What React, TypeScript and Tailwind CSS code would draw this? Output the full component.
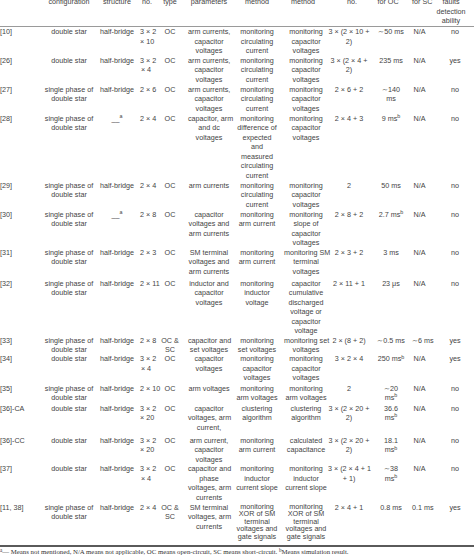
import React from "react";

const GRID =
  "grid grid-cols-[44px_50px_46px_12px_36px_42px_54px_44px_42px_42px_15px_56px]";

type Row = { h: string; c: string[][]; tight?: boolean };

const SP = "single phase of";
const DS = "double star";
const HB = "half-bridge";

const rows: Row[] = [
  {
    h: "h-[28.7px]",
    c: [["[10]"], [DS], [HB], ["3 × 2", "× 10"], ["OC"], ["arm currents,", "capacitor", "voltages"], ["monitoring", "circulating", "current"], ["monitoring", "capacitor", "voltages"], ["3 × (2 × 10 +", "2)"], ["∼50 ms"], ["N/A"], ["no"]],
  },
  {
    h: "h-[29px]",
    c: [["[26]"], [DS], [HB], ["3 × 2", "× 4"], ["OC"], ["arm currents,", "capacitor", "voltages"], ["monitoring", "circulating", "current"], ["monitoring", "capacitor", "voltages"], ["3 × (2 × 4 +", "2)"], ["235 ms"], ["N/A"], ["yes"]],
  },
  {
    h: "h-[28.6px]",
    c: [["[27]"], [SP, DS], [HB], ["2 × 6"], ["OC"], ["arm currents,", "capacitor", "voltages"], ["monitoring", "circulating", "current"], ["monitoring", "capacitor", "voltages"], ["2 × 6 + 2"], ["∼140", "ms"], ["N/A"], ["no"]],
  },
  {
    h: "h-[67.4px]",
    c: [["[28]"], [SP, DS], ["__^a"], ["2 × 4"], ["OC"], ["capacitor, arm", "and dc", "voltages"], ["monitoring", "difference of", "expected", "and", "measured", "circulating", "current"], ["monitoring", "capacitor", "voltages"], ["2 × 4 + 3"], ["9 ms^b"], ["N/A"], ["no"]],
  },
  {
    h: "h-[29px]",
    c: [["[29]"], [SP, DS], [HB], ["2 × 4"], ["OC"], ["arm currents"], ["monitoring", "circulating", "current"], ["monitoring", "capacitor", "voltages"], ["2"], ["50 ms"], ["N/A"], ["no"]],
  },
  {
    h: "h-[37.6px]",
    c: [["[30]"], [SP, DS], ["__^a"], ["2 × 8"], ["OC"], ["capacitor", "voltages and", "arm currents"], ["monitoring", "arm current"], ["monitoring", "slope of", "capacitor", "voltages"], ["2 × 8 + 2"], ["2.7 ms^b"], ["N/A"], ["no"]],
  },
  {
    h: "h-[31.1px]",
    c: [["[31]"], [SP, DS], [HB], ["2 × 3"], ["OC"], ["SM terminal", "voltages and", "arm currents"], ["monitoring", "arm current"], ["monitoring SM", "terminal", "voltages"], ["2 × 3 + 2"], ["3 ms"], ["N/A"], ["no"]],
  },
  {
    h: "h-[57.3px]",
    c: [["[32]"], [SP, DS], [HB], ["2 × 11"], ["OC"], ["inductor and", "capacitor", "voltages"], ["monitoring", "inductor", "voltage"], ["capacitor", "cumulative", "discharged", "voltage or", "capacitor", "voltage"], ["2 × 11 + 1"], ["23 μs"], ["N/A"], ["no"]],
  },
  {
    h: "h-[18.3px]",
    c: [["[33]"], [SP, DS], [HB], ["2 × 8"], ["OC &", "SC"], ["capacitor and", "set voltages"], ["monitoring", "set voltages"], ["monitoring set", "voltages"], ["2 × (8 + 2)"], ["∼0.5 ms"], ["∼6 ms"], ["yes"]],
  },
  {
    h: "h-[29.3px]",
    c: [["[34]"], [DS], [HB], ["3 × 2", "× 4"], ["OC"], ["capacitor", "voltages"], ["monitoring", "capacitor", "voltages"], ["monitoring", "capacitor", "voltages"], ["3 × 2 × 4"], ["250 ms^b"], ["N/A"], ["yes"]],
  },
  {
    h: "h-[20px]",
    c: [["[35]"], [SP, DS], [HB], ["2 × 10"], ["OC"], ["arm voltages"], ["monitoring", "arm voltages"], ["monitoring", "arm voltages"], ["2"], ["∼20", "ms^b"], ["N/A"], ["no"]],
  },
  {
    h: "h-[32.4px]",
    c: [["[36]-CA"], [DS], [HB], ["3 × 2", "× 20"], ["OC"], ["capacitor", "voltages, arm", "current,"], ["clustering", "algorithm"], ["clustering", "algorithm"], ["3 × (2 × 20 +", "2)"], ["36.6", "ms^b"], ["N/A"], ["no"]],
  },
  {
    h: "h-[28.3px]",
    c: [["[36]-CC"], [DS], [HB], ["3 × 2", "× 20"], ["OC"], ["arm current,", "capacitor", "voltages"], ["monitoring", "arm current"], ["calculated", "capacitance"], ["3 × (2 × 20 +", "2)"], ["18.1", "ms^b"], ["N/A"], ["no"]],
  },
  {
    h: "h-[38.3px]",
    c: [["[37]"], [DS], [HB], ["3 × 2", "× 4"], ["OC"], ["capacitor and", "phase", "voltages, arm", "currents"], ["monitoring", "inductor", "current slope"], ["monitoring", "inductor", "current slope"], ["3 × (2 × 4 + 1", "+ 1)"], ["∼38", "ms^b"], ["N/A"], ["no"]],
  },
  {
    h: "h-[42.6px]",
    tight: true,
    c: [["[11, 38]"], [SP, DS], [HB], ["2 × 4"], ["OC &", "SC"], ["SM terminal", "voltages, arm", "currents"], ["monitoring", "XOR of SM", "terminal", "voltages and", "gate signals"], ["monitoring", "XOR of SM", "terminal", "voltages and", "gate signals"], ["2 × 4 + 1"], ["0.8 ms"], ["0.1 ms"], ["yes"]],
  },
];

function Line({ t }: { t: string }) {
  const i = t.indexOf("^");
  if (i < 0) return <div>{t}</div>;
  return (
    <div>
      {t.slice(0, i)}
      <sup>{t.slice(i + 1)}</sup>
    </div>
  );
}

const headers: { lines: string[]; cls: string }[] = [
  { lines: [], cls: "" },
  { lines: ["configuration"], cls: "" },
  { lines: ["structure"], cls: "" },
  { lines: ["no."], cls: "pl-[2px]" },
  { lines: ["type"], cls: "" },
  { lines: ["parameters"], cls: "" },
  { lines: ["method"], cls: "" },
  { lines: ["method"], cls: "pr-[6px]" },
  { lines: ["no."], cls: "pl-[6px]" },
  { lines: ["for OC"], cls: "pr-[6px]" },
  { lines: ["for SC"], cls: "pr-[10px]" },
  { lines: ["faults", "detection", "ability"], cls: "pr-[8px]" },
];

export default function App() {
  return (
    <div className="w-[474px] h-[560px] overflow-hidden bg-white text-[#444444]">
      <div className="w-[483px] mt-[-3px] font-['Liberation_Sans',Arial,sans-serif] text-[7.2px] leading-[9.5px]">
        <div className={`${GRID} pb-[0.8px] border-b-[1.5px] border-[#9a9a9a]`}>
          {headers.map((h, i) => (
            <div key={i} className={`text-center whitespace-nowrap ${h.cls}`}>
              {h.lines.map((l, j) => (
                <div key={j}>{l}</div>
              ))}
            </div>
          ))}
        </div>
        {rows.map((r, ri) => (
          <div key={ri} className={`${GRID} ${r.h}`}>
            {r.c.map((cell, ci) => (
              <div
                key={ci}
                className={`whitespace-nowrap ${ci === 0 ? "text-left" : "text-center"} ${
                  r.tight && (ci === 6 || ci === 7) ? "leading-[7.6px]" : ""
                }`}
              >
                {cell.map((l, li) => (
                  <Line key={li} t={l} />
                ))}
              </div>
            ))}
          </div>
        ))}
        <div className="border-t-[2.5px] border-[#5a5a5a]" />
        <div className="font-['Liberation_Serif','Times_New_Roman',serif] text-[6.8px] leading-[10px] text-[#333333] whitespace-nowrap">
          <sup>a</sup>— Means not mentioned, N/A means not applicable, OC means open-circuit, SC means short-circuit.{" "}
          <sup>b</sup>Means simulation result.
        </div>
      </div>
    </div>
  );
}
